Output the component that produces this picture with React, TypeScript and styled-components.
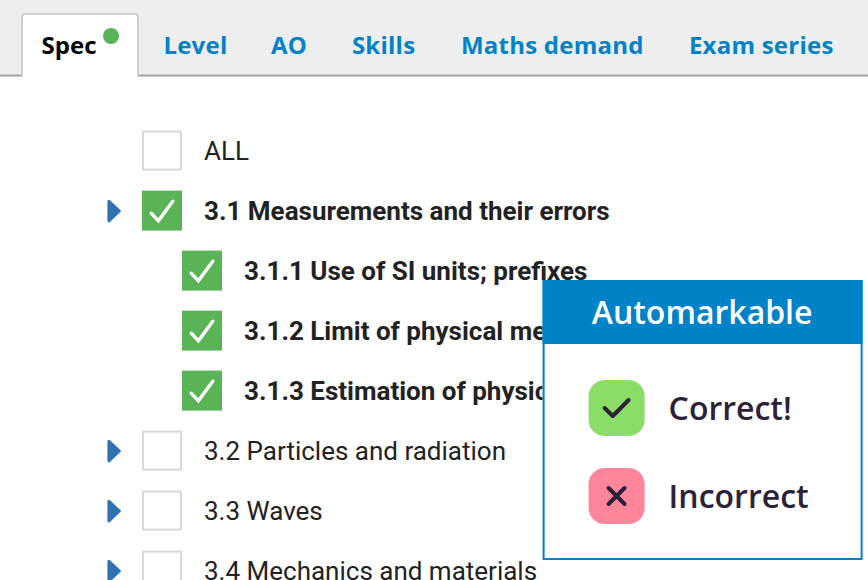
import React from 'react';
import styled, { createGlobalStyle } from 'styled-components';

const GlobalStyle = createGlobalStyle`
  * { box-sizing: border-box; }
  body { margin: 0; background: #fff; }
`;

const Page = styled.div`
  position: relative;
  width: 868px;
  height: 580px;
  overflow: hidden;
  background: #fff;
`;

const TabBar = styled.nav`
  display: flex;
  align-items: flex-end;
  height: 77px;
  padding-left: 21.4px;
  background: linear-gradient(#c9c9c9, #c9c9c9) 0 74px / 100% 1px no-repeat,
    linear-gradient(#a8a8a8, #a8a8a8) 0 75px / 100% 1px no-repeat,
    linear-gradient(#cecece, #cecece) 0 76px / 100% 1px no-repeat, #eee;
`;

const Tab = styled.a<{ $active?: boolean; $width: number }>`
  display: flex;
  flex: none;
  width: ${(p) => p.$width}px;
  height: ${(p) => (p.$active ? 64 : 63)}px;
  padding: ${(p) => (p.$active ? '14px 0 0 18px' : '15px 0 0 0')};
  border: ${(p) => (p.$active ? '2px solid #d2d2d2' : '0')};
  border-bottom: 0;
  border-radius: 4px 4px 0 0;
  margin-right: ${(p) => (p.$active ? 24 : 0)}px;
  background: ${(p) => (p.$active ? '#fff' : 'transparent')};
  color: ${(p) => (p.$active ? '#000' : '#0082c8')};
  font: 700 24px/32px 'Open Sans', sans-serif;
  letter-spacing: ${(p) => (p.$active ? 0.1 : 0.24)}px;
  white-space: nowrap;
`;

const Dot = styled.span`
  width: 16px;
  height: 16px;
  margin: -0.6px 0 0 6px;
  border-radius: 50%;
  background: #5bb357;
`;

const Tree = styled.ul`
  margin: 0;
  padding: 44px 0 0 106px;
  list-style: none;
`;

const Row = styled.li<{ $nested?: boolean; $bold?: boolean }>`
  display: flex;
  align-items: center;
  height: 60px;
  padding-left: ${(p) => (p.$nested ? 40 : 0)}px;
  color: #222;
  font: ${(p) => (p.$bold ? 700 : 400)} 26px/30px Roboto, sans-serif;
  white-space: nowrap;
`;

const ArrowSlot = styled.span`
  display: flex;
  width: 36px;
  height: 24px;
`;

const Label = styled.span`
  margin-left: 22px;
`;

const Panel = styled.section`
  position: absolute;
  left: 0;
  top: 280px;
  transform: translateX(542.6px);
  width: 320px;
  height: 280px;
  border: 2px solid #0082c8;
  background: #fff;
`;

const PanelTitle = styled.h2`
  height: 64px;
  margin: -2px -2px 0;
  padding: 2px 1px 0 0;
  background: #0082c8;
  color: #fff;
  font: 600 32px/60px 'Open Sans', sans-serif;
  text-align: center;
`;

const Results = styled.div`
  display: flex;
  flex-direction: column;
  gap: 32px;
  padding: 36px 0 0 44px;
`;

const Result = styled.div`
  display: flex;
  align-items: center;
  gap: 24px;
  height: 56px;
  color: #2b2238;
  font: 600 32px/44px 'Open Sans', sans-serif;
`;

const Badge = styled.span<{ $color: string }>`
  display: flex;
  width: 56px;
  height: 56px;
  border-radius: 16px;
  background: ${(p) => p.$color};
`;

const Arrow = () => (
  <svg width="16" height="24" viewBox="0 0 16 24">
    <path d="M2.9 2.3 13.3 12 2.9 21.8Z" fill="#2f72b0" stroke="#2f72b0" strokeWidth="3" strokeLinejoin="round" />
  </svg>
);

const Checkbox = ({ checked }: { checked?: boolean }) => (
  <svg width="40" height="42" viewBox="0 0 40 42">
    {checked ? (
      <>
        <rect y="0.6" width="40" height="40" fill="#5bb357" />
        <path d="M9.2 23.2 16.4 30.8 30.8 11.2" fill="none" stroke="#fff" strokeWidth="3.4" strokeLinecap="round" />
      </>
    ) : (
      <rect x="1" y="1.6" width="38" height="38" fill="#fff" stroke="#d9d9d9" strokeWidth="2" />
    )}
  </svg>
);

const tabs = [
  { label: 'Level', width: 107.5 },
  { label: 'AO', width: 81 },
  { label: 'Skills', width: 109 },
  { label: 'Maths demand', width: 228 },
  { label: 'Exam series', width: 150 },
];

const rows = [
  { label: 'ALL' },
  { label: '3.1 Measurements and their errors', checked: true, arrow: true },
  { label: '3.1.1 Use of SI units; prefixes', checked: true, nested: true },
  { label: '3.1.2 Limit of physical measurements', checked: true, nested: true },
  { label: '3.1.3 Estimation of physical quantities', checked: true, nested: true },
  { label: '3.2 Particles and radiation', arrow: true },
  { label: '3.3 Waves', arrow: true },
  { label: '3.4 Mechanics and materials', arrow: true },
];

export default function App() {
  return (
    <>
      <GlobalStyle />
      <Page>
        <TabBar>
          <Tab $active $width={118}>
            Spec
            <Dot />
          </Tab>
          {tabs.map((t) => (
            <Tab key={t.label} $width={t.width}>
              {t.label}
            </Tab>
          ))}
        </TabBar>
        <Tree>
          {rows.map((r) => (
            <Row key={r.label} $nested={r.nested} $bold={r.checked}>
              <ArrowSlot>{r.arrow && <Arrow />}</ArrowSlot>
              <Checkbox checked={r.checked} />
              <Label>{r.label}</Label>
            </Row>
          ))}
        </Tree>
        <Panel>
          <PanelTitle>Automarkable</PanelTitle>
          <Results>
            <Result>
              <Badge $color="#8cdd68">
                <svg width="56" height="56" viewBox="0 0 56 56" fill="none" stroke="#2b2238" strokeWidth="4" strokeLinecap="round" strokeLinejoin="round">
                  <path d="M16 28 24.2 36 40 20" />
                </svg>
              </Badge>
              Correct!
            </Result>
            <Result>
              <Badge $color="#ff859b">
                <svg width="56" height="56" viewBox="0 0 56 56" fill="none" stroke="#2b2238" strokeWidth="4" strokeLinecap="round">
                  <path d="M20 20 36 36M36 20 20 36" />
                </svg>
              </Badge>
              Incorrect
            </Result>
          </Results>
        </Panel>
      </Page>
    </>
  );
}
